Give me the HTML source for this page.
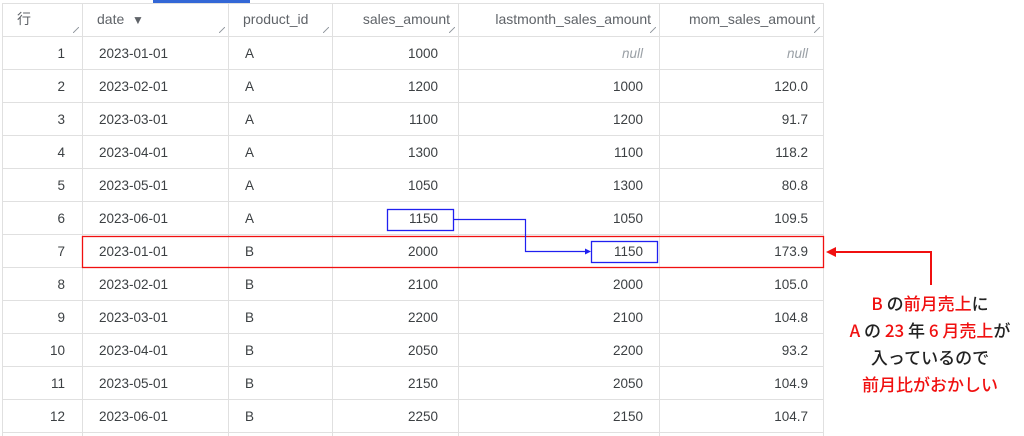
<!DOCTYPE html>
<html><head><meta charset="utf-8"><style>
body{margin:0;width:1024px;height:436px;background:#fff;position:relative;overflow:hidden;font-family:"Liberation Sans",Arial,sans-serif;font-size:13.5px;color:#3c4043}
.c{position:absolute;height:33px;line-height:33px;box-sizing:border-box;white-space:nowrap}
.r{text-align:right}
.hl{position:absolute;height:1px;background:#e0e0e0;left:2px;width:821px}
.vl{position:absolute;width:1px;background:#e0e0e0;top:3px;height:433px}
.h{color:#5f6368;font-size:14px}
.n{font-style:italic;color:#9aa0a6}
.g{position:absolute;width:6px;height:6px;background:linear-gradient(135deg,transparent 45%,#9aa0a6 45%,#9aa0a6 55%,transparent 55%)}
.note{position:absolute;left:830px;width:200px;text-align:center;font-family:"Noto Sans CJK JP",sans-serif;font-size:17px;font-weight:500;color:#222;line-height:27px}
.red{color:#f01010}
</style></head><body>
<div style="position:absolute;left:153px;top:0;width:97px;height:3px;background:#3367d6"></div>
<div id="grid"></div>
<script>
var cols=[2,82,228,332,458,659,823];
var g=document.getElementById('grid'),h='';
for(var i=0;i<cols.length;i++)h+='<div class="vl" style="left:'+cols[i]+'px"></div>';
h+='<div class="hl" style="top:3px"></div>';
for(var r=0;r<=12;r++)h+='<div class="hl" style="top:'+(36+r*33)+'px"></div>';
var hd=['行','date &nbsp;<span style="font-size:12px">▼</span>','product_id','sales_amount','lastmonth_sales_amount','mom_sales_amount'];
var al=[0,0,0,1,1,1];
for(var i=0;i<6;i++){
 if(al[i])h+='<div class="c h r" style="top:3px;left:'+cols[i]+'px;width:'+(cols[i+1]-cols[i]-8)+'px">'+hd[i]+'</div>';
 else h+='<div class="c h" style="top:3px;left:'+(cols[i]+15)+'px">'+hd[i]+'</div>';
 h+='<div class="g" style="left:'+(cols[i+1]-9)+'px;top:27px"></div>';}
var d=[['2023-01-01','A',1000,'<span class="n">null</span>','<span class="n">null</span>'],['2023-02-01','A',1200,1000,'120.0'],['2023-03-01','A',1100,1200,'91.7'],['2023-04-01','A',1300,1100,'118.2'],['2023-05-01','A',1050,1300,'80.8'],['2023-06-01','A',1150,1050,'109.5'],['2023-01-01','B',2000,1150,'173.9'],['2023-02-01','B',2100,2000,'105.0'],['2023-03-01','B',2200,2100,'104.8'],['2023-04-01','B',2050,2200,'93.2'],['2023-05-01','B',2150,2050,'104.9'],['2023-06-01','B',2250,2150,'104.7']];
for(var r=0;r<12;r++){var t=37+r*33;
 h+='<div class="c r" style="top:'+t+'px;left:2px;width:63px">'+(r+1)+'</div>';
 h+='<div class="c" style="top:'+t+'px;left:99px">'+d[r][0]+'</div>';
 h+='<div class="c" style="top:'+t+'px;left:245px">'+d[r][1]+'</div>';
 h+='<div class="c r" style="top:'+t+'px;left:332px;width:106px">'+d[r][2]+'</div>';
 h+='<div class="c r" style="top:'+t+'px;left:458px;width:185px">'+d[r][3]+'</div>';
 h+='<div class="c r" style="top:'+t+'px;left:659px;width:149px">'+d[r][4]+'</div>';}
g.innerHTML=h;
</script>
<svg width="1024" height="436" style="position:absolute;left:0;top:0">
<rect x="82.5" y="236.5" width="741" height="31" fill="none" stroke="#f01010" stroke-width="1.3"/>
<rect x="387.5" y="209.5" width="66" height="21" fill="none" stroke="#2020f0" stroke-width="1.3"/>
<rect x="591.5" y="241.5" width="66" height="21" fill="none" stroke="#2020f0" stroke-width="1.3"/>
<polyline points="454,219.5 525.5,219.5 525.5,251.5 586,251.5" fill="none" stroke="#2020f0" stroke-width="1.2"/>
<polygon points="591,251.5 585,248.5 585,254.5" fill="#2020f0"/>
<polyline points="931,285 931,252 834,252" fill="none" stroke="#f01010" stroke-width="2"/>
<polygon points="826,252 836,247 836,257" fill="#f01010"/>
</svg>
<div class="note" style="top:289px"><span class="red">B</span> の<span class="red">前月売上</span>に</div>
<div class="note" style="top:316px"><span class="red">A</span> の <span class="red">23</span> 年 <span class="red">6</span> <span class="red">月売上</span>が</div>
<div class="note" style="top:343px">入っているので</div>
<div class="note red" style="top:370px">前月比がおかしい</div>
</body></html>
